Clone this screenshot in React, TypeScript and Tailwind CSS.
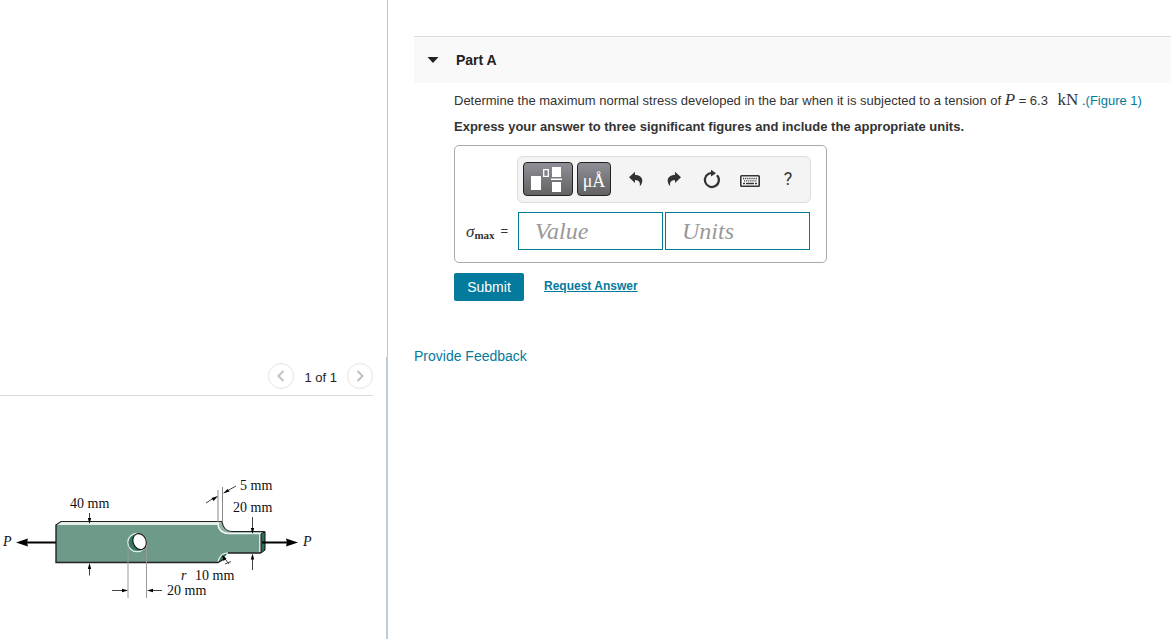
// App.tsx
import React from 'react';

const serif = 'font-["Liberation_Serif",serif]';

const BarFigure: React.FC = () => {
  return (
    <svg viewBox="0 470 320 140" width="320" height="140" className='block font-["Liberation_Serif",serif] text-sm' role="img" aria-label="Stepped bar with a hole, pulled by P at both ends">
      {/* top face */}
      <path d="M56 525 L61 521.5 H222 L219 525 H56 Z" fill="#e6eeea" />
      {/* front face */}
      <path d="M56 525 H218 C218 530 222 534 229 534 H260 V553 H229 C223 553 221 558 218 562.5 H56 Z" fill="#6d9a89" />
      {/* fillet at the top of the neck */}
      <path d="M218 523 L222 522 C223 528 227 531.5 232 531.5 H265 L260 534 H229 C222 534 218 530 218 523 Z" fill="#8fb3a5" />
      <path d="M218 523 C218 529.5 222 533.5 229 533.5 H260 V552" fill="none" stroke="#f0f5f2" strokeWidth="1.6" />
      {/* end face */}
      <path d="M261 534 L265 531.5 V550 L261 553 Z" fill="#2f6f5a" stroke="#111" strokeWidth="1" />
      {/* fillet at the bottom */}
      <path d="M218 562.5 C219 557 222 553 229 553 C225 555 225 557 224 559 Z" fill="#3b7a66" />
      <path d="M218 562 C219 557 222 553 228 553" fill="none" stroke="#eef4f1" strokeWidth="1.2" />
      <path d="M56 525 L61 521.5 H222 C223 528 227 531.5 232 531.5 H265" fill="none" stroke="#222" strokeWidth="1.1" />
      <path d="M56 524.5 V562.5 H218 L224 559 M228 553 H261" fill="none" stroke="#222" strokeWidth="1.4" />

      {/* hole */}
      <circle cx="137" cy="542.5" r="9.2" fill="#35775f" stroke="#e4eeea" strokeWidth="1.2" />
      <ellipse cx="139.6" cy="541.6" rx="6.5" ry="8.2" fill="#fff" stroke="#111" strokeWidth="1.1" transform="rotate(-22 139.6 541.6)" />
      <path d="M128 546 V598 M146.5 545 V598" stroke="#999" strokeWidth="1" />
      <path d="M218 490 V522 M222.5 487 V521" stroke="#888" strokeWidth="1" />

      {/* loads */}
      <path d="M24 542.5 H56 M262 542.5 H290" stroke="#000" strokeWidth="2" />
      <path d="M16 542.5 L28 538.5 L27 542.5 L28 546.5 Z M298 542.5 L286 538.5 L287 542.5 L286 546.5 Z" fill="#000" />

      {/* dimension arrows */}
      <path d="M89.5 513 V520 M89.5 566 V575.5 M252.5 517 V530 M252.5 556 V570 M112 590.5 H124 M150 590.5 H162 M206 503 L213 498.5 M228 490.5 L236 486 M223 556 L229 564 M225 564 L231 561.5" fill="none" stroke="#444" strokeWidth="1" />
      <path d="M89.5 524 L87.8 518 H91.2 Z M89.5 563 L87.8 569 H91.2 Z M252.5 534 L250.8 528 H254.2 Z M252.5 553.5 L250.8 559.5 H254.2 Z M128 590.5 L122 588.8 V592.2 Z M147 590.5 L153 588.8 V592.2 Z M218 496 L211.5 498 L213.5 501 Z M223 493.5 L227.5 489 L229.5 491.5 Z M222 555 L226.5 558.5 L223.5 561 Z" fill="#000" />

      <g fill="#111">
        <text x="70" y="508">40 mm</text>
        <text x="240" y="490">5 mm</text>
        <text x="233" y="512">20 mm</text>
        <text x="181" y="580" fontStyle="italic">r</text>
        <text x="195" y="580">10 mm</text>
        <text x="167" y="595">20 mm</text>
        <text x="3" y="546" fontStyle="italic">P</text>
        <text x="303" y="546" fontStyle="italic">P</text>
      </g>
    </svg>
  );
};

const PagerButton: React.FC<{ label: string; d: string }> = ({ label, d }) => (
  <button aria-label={label} className="flex size-[26px] items-center justify-center rounded-full border border-[#e3e3e3] bg-white">
    <svg width="12" height="14" viewBox="0 0 12 14" fill="none" stroke="#bfbfc4" strokeWidth="2">
      <path d={d} />
    </svg>
  </button>
);

const darkButton = 'flex h-[34px] items-center justify-center rounded border border-[#222] bg-linear-to-b from-[#908f98] to-[#626263] text-white';
const toolButton = 'flex h-[34px] w-[38px] items-center justify-center text-[#333]';

const Toolbar: React.FC = () => {
  return (
    <div className="flex h-[47px] items-start rounded-md border border-[#dddddd] bg-[#f4f4f4] pl-[5px] pt-[5px]">
      <button aria-label="Templates" className={`${darkButton} w-[50px]`}>
        <svg width="34" height="28" viewBox="0 0 34 28">
          <path d="M0 11 H10 V25 H0 Z M21 2 H30 V12 H21 Z M21 17 H30 V27 H21 Z M20 13.5 H31 V15 H20 Z" fill="#fff" />
          <path d="M12.7 4.7 H17.3 V11.3 H12.7 Z" fill="none" stroke="#fff" strokeWidth="1.3" />
        </svg>
      </button>
      <button aria-label="Symbols" className={`${darkButton} ${serif} ml-1 w-[34px] pt-1 text-lg`}>μÅ</button>
      <div className="ml-[6px] flex">
        <button aria-label="undo" className={toolButton}>
          <svg width="16" height="16" viewBox="0 0 16 16" fill="currentColor">
            <path d="M1 6.3 L7 0.8 V4 C12 4 14.3 6.5 14.3 9.5 C14.3 11.5 13.5 13.5 11.8 15.3 C12.4 11 11 9 7 8.9 V12 Z" />
          </svg>
        </button>
        <button aria-label="redo" className={toolButton}>
          <svg width="16" height="16" viewBox="0 0 16 16" fill="currentColor">
            <path d="M15 6.3 L9 0.8 V4 C4 4 1.7 6.5 1.7 9.5 C1.7 11.5 2.5 13.5 4.2 15.3 C3.6 11 5 9 9 8.9 V12 Z" />
          </svg>
        </button>
        <button aria-label="reset" className={toolButton}>
          <svg width="18" height="20" viewBox="0 0 18 20">
            <path d="M14 6.2 A7 7 0 1 1 8.5 4" fill="none" stroke="currentColor" strokeWidth="2.2" />
            <path d="M8 0.8 L13 4.2 L8 7.5 Z" fill="currentColor" />
          </svg>
        </button>
        <button aria-label="keyboard shortcuts" className={toolButton}>
          <svg width="20" height="12" viewBox="0 0 20 12" className="mt-1">
            <rect x="0.8" y="0.8" width="18.4" height="10.4" rx="0.8" fill="#fff" stroke="currentColor" strokeWidth="1.6" />
            <path d="M3 3.5 H17 M4 5.8 H17" stroke="currentColor" strokeWidth="1.3" strokeDasharray="1.2 0.9" />
            <path d="M3 8.5 H5 M6 8.5 H14 M15 8.5 H17" stroke="currentColor" strokeWidth="1.4" />
          </svg>
        </button>
        <button aria-label="help" className={`${toolButton} font-['Roboto',sans-serif] text-lg`}>?</button>
      </div>
    </div>
  );
};

const field = 'h-[38px] w-full min-w-0 flex-1 border border-[#047a9c] bg-white pl-4 text-2xl italic text-[#333] outline-none placeholder:text-[#999] placeholder:opacity-100';

const App: React.FC = () => {
  return (
    <div className='flex min-h-screen bg-white font-["Liberation_Sans",Arial,sans-serif] text-[13px] text-[#333]'>
      <aside className="flex w-[388px] shrink-0 flex-col">
        <div className="h-[357px] border-r border-[#bfc6cf]" />
        <div className="flex-1 border-r-2 border-[#b9cbdc] pr-[13px] pt-[6px]">
          <div className="flex items-center justify-end gap-[10px] border-b border-[#d9d9d9] pb-[6px]">
            <PagerButton label="Previous figure" d="M8.5 2 L3.5 7 L8.5 12" />
            <span className="pt-[3px] text-[#222]">1 of 1</span>
            <PagerButton label="Next figure" d="M3.5 2 L8.5 7 L3.5 12" />
          </div>
          <div className="pt-[74px]">
            <BarFigure />
          </div>
        </div>
      </aside>

      <main className="min-w-0 flex-1 pl-[26px] pt-9">
        <section>
          <h2 className="flex h-[47px] items-center border-t border-[#dddddd] bg-[#f9f9f9] text-sm font-bold text-[#222]">
            <button aria-expanded="true" className="flex items-center gap-[17px] pl-[13px]">
              <svg width="12" height="6" viewBox="0 0 12 6"><path d="M0.5 0 H11.5 L6 6 Z" fill="#222" /></svg>
              Part A
            </button>
          </h2>

          <div className="pl-10">
            <p className="pt-[5px] leading-[26px]">
              Determine the maximum normal stress developed in the bar when it is subjected to a tension of{' '}
              <i className={`${serif} text-[17px] leading-none`}>P</i> = 6.3{' '}
              <span className={`${serif} ml-[6px] text-[17px] leading-none`}>kN</span> .
              <a href="#figure-1" className="text-[#047a9c]">(Figure 1)</a>
            </p>
            <p className="font-bold leading-[26px]">Express your answer to three significant figures and include the appropriate units.</p>

            <div className="mt-[5px] flex h-[118px] w-[373px] items-end rounded-[5px] border border-[#aaaaaa] pb-3 pl-[11px] pr-[15px]">
              <label htmlFor="value" className="flex h-[38px] w-[51px] shrink-0 items-center">
                <span className={`${serif} pt-[2px] text-[17px] italic`}>σ</span>
                <span className={`${serif} pt-2 text-[11px] font-bold`}>max</span>
                <span className="pl-[6px]">=</span>
              </label>
              <div className="flex min-w-0 flex-1 flex-col gap-[9px]">
                <Toolbar />
                <div className={`${serif} flex gap-[2px] px-px`}>
                  <input id="value" type="text" placeholder="Value" className={field} />
                  <input aria-label="Units" type="text" placeholder="Units" className={field} />
                </div>
              </div>
            </div>

            <div className="mt-[10px] flex items-center gap-5">
              <button className="h-7 w-[70px] rounded-[2px] bg-[#047a9c] text-sm text-white">Submit</button>
              <a href="#answer" className="pb-[2px] text-xs font-bold text-[#047a9c] underline">Request Answer</a>
            </div>
          </div>
        </section>

        <a href="#feedback" className="mt-[45px] inline-block text-sm text-[#047a9c]">Provide Feedback</a>
      </main>
    </div>
  );
};

export default App;
